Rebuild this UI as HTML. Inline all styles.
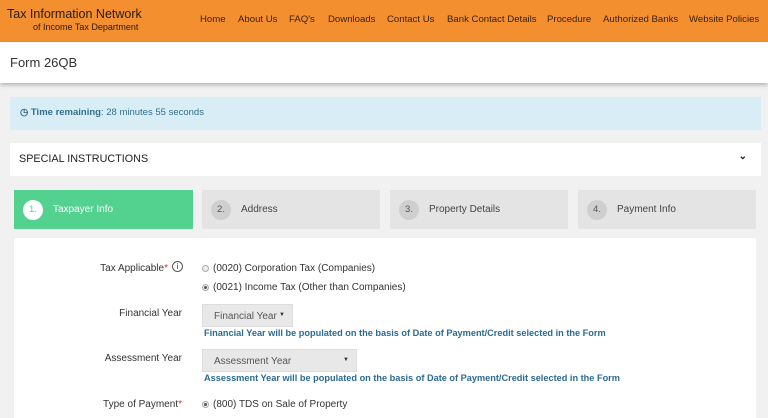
<!DOCTYPE html>
<html><head><meta charset="utf-8"><style>
*{box-sizing:border-box;margin:0;padding:0}
body{width:768px;height:412px;overflow:hidden;background:#f1f1f1;font-family:"Liberation Sans",Arial,sans-serif;position:relative;color:#333}
.hdr{position:absolute;left:0;top:0;width:768px;height:42px;background:#f48f2f}
.t1{position:absolute;left:7px;top:7px;font-size:12.5px;color:#2a1a0a}
.t2{position:absolute;left:33px;top:22px;font-size:9px;color:#2a1a0a}
.nav{position:absolute;top:14px;font-size:9.6px;color:#3a220c}
.ttl{position:absolute;left:0;top:42px;width:768px;height:41px;background:#fff;box-shadow:0 2px 4px rgba(0,0,0,.25)}
.ttl span{position:absolute;left:10px;top:13px;font-size:13px;color:#333}
.alert{position:absolute;left:10px;top:97px;width:751px;height:33px;background:#d9edf7;font-size:9.5px;color:#31708f;padding:10px 0 0 10px}
.spec{position:absolute;left:10px;top:143px;width:751px;height:33px;background:#fff;font-size:10.8px;color:#222;padding:10px 0 0 9px}
.step{position:absolute;top:190px;height:39px;background:#e4e4e4;font-size:10px;color:#444}
.step .c{position:absolute;left:9px;top:10px;width:20px;height:20px;border-radius:50%;background:#cfcfcf;font-size:9.5px;text-align:center;line-height:20px;color:#555}
.step .l{position:absolute;left:39px;top:14px}
.panel{position:absolute;left:14px;top:238px;width:742px;height:180px;background:#fff}
.lbl{position:absolute;font-size:10px;color:#333;text-align:right;width:170px;left:12px}
.r{position:absolute;left:202px;font-size:10px;color:#333}
.r i{display:inline-block;width:7px;height:7px;border:1px solid #aaa;border-radius:50%;background:#eee;margin-right:4px;vertical-align:-1px;position:relative}
.r i.on::after{content:"";position:absolute;left:1px;top:1px;width:3px;height:3px;border-radius:50%;background:#555}
.sel{position:absolute;left:202px;height:23px;background:#e8e8e8;border:1px solid #ddd;font-size:10px;color:#555;padding:6px 0 0 11px}
.sel b{position:absolute;right:7px;top:7px;font-size:6px;color:#333}
.help{position:absolute;left:204px;font-size:9.2px;font-weight:bold;color:#2b6a93}
.red{color:#d33}
</style></head><body>
<div class="hdr"><div class="t1">Tax Information Network</div><div class="t2">of Income Tax Department</div>
<span class="nav" style="left:200px">Home</span><span class="nav" style="left:238px">About Us</span><span class="nav" style="left:289px">FAQ's</span><span class="nav" style="left:328px">Downloads</span><span class="nav" style="left:387px">Contact Us</span><span class="nav" style="left:447px">Bank Contact Details</span><span class="nav" style="left:547px">Procedure</span><span class="nav" style="left:603px">Authorized Banks</span><span class="nav" style="left:689px">Website Policies</span></div>
<div class="ttl"><span>Form 26QB</span></div>
<div class="alert"><b>&#9719; Time remaining</b>: 28 minutes 55 seconds</div>
<div class="spec">SPECIAL INSTRUCTIONS<span style="position:absolute;right:14px;top:8px;font-size:10px;font-weight:bold">&#8964;</span></div>
<div class="step" style="left:14px;width:179px;background:#52d18f;color:#fff"><div class="c" style="background:#fff;color:#52d18f">1.</div><div class="l">Taxpayer Info</div></div>
<div class="step" style="left:202px;width:178px"><div class="c">2.</div><div class="l">Address</div></div>
<div class="step" style="left:390px;width:178px"><div class="c">3.</div><div class="l">Property Details</div></div>
<div class="step" style="left:578px;width:178px"><div class="c">4.</div><div class="l">Payment Info</div></div>
<div class="panel"></div>
<div class="lbl" style="top:263px;width:156px">Tax Applicable<span class="red">*</span></div>
<div style="position:absolute;left:172px;top:261px;width:11px;height:11px;border:1px solid #555;border-radius:50%;font-size:8px;text-align:center;line-height:10px">i</div>
<div class="r" style="top:263px"><i></i>(0020) Corporation Tax (Companies)</div>
<div class="r" style="top:282px"><i class="on"></i>(0021) Income Tax (Other than Companies)</div>
<div class="lbl" style="top:308px">Financial Year</div>
<div class="sel" style="top:304px;width:91px">Financial Year<b>&#9660;</b></div>
<div class="help" style="top:328px">Financial Year will be populated on the basis of Date of Payment/Credit selected in the Form</div>
<div class="lbl" style="top:353px">Assessment Year</div>
<div class="sel" style="top:349px;width:155px">Assessment Year<b>&#9660;</b></div>
<div class="help" style="top:373px">Assessment Year will be populated on the basis of Date of Payment/Credit selected in the Form</div>
<div class="lbl" style="top:399px">Type of Payment<span class="red">*</span></div>
<div class="r" style="top:399px"><i class="on"></i>(800) TDS on Sale of Property</div>
</body></html>
